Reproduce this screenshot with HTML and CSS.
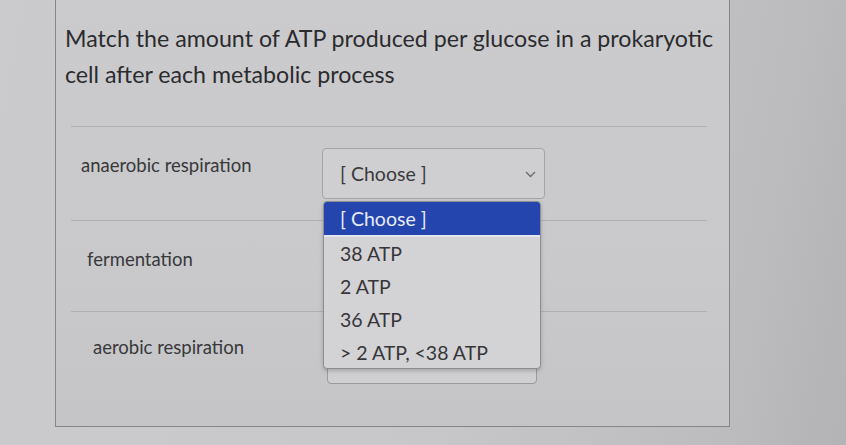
FILE: index.html
```html
<!DOCTYPE html>
<html>
<head>
<meta charset="utf-8">
<link rel="stylesheet" href="styles.css">
</head>
<body>
<div class="page">
  <div class="card">
    <p class="question">Match the amount of ATP produced per glucose in a prokaryotic cell after each metabolic process</p>
    <div class="rows">
      <div class="row">
        <div class="label">anaerobic respiration</div>
        <div class="select-wrap">
          <div class="select">
            <span>[ Choose ]</span>
            <svg class="chev" width="11" height="7" viewBox="0 0 11 7"><path d="M1 1 L5.5 5.5 L10 1" fill="none" stroke="#6a6a6e" stroke-width="1.3"/></svg>
          </div>
          <ul class="menu">
            <li class="active">[ Choose ]</li>
            <li>38 ATP</li>
            <li>2 ATP</li>
            <li>36 ATP</li>
            <li>&gt; 2 ATP, &lt;38 ATP</li>
          </ul>
        </div>
      </div>
      <div class="row">
        <div class="label">fermentation</div>
        <div class="select-wrap inner">
          <div class="select"></div>
        </div>
      </div>
      <div class="row">
        <div class="label">aerobic respiration</div>
        <div class="select-wrap inner">
          <div class="select"></div>
        </div>
      </div>
    </div>
  </div>
</div>
</body>
</html>
```
FILE: styles.css
```css
* { box-sizing: border-box; }
html, body {
  margin: 0;
  padding: 0;
  width: 846px;
  height: 445px;
  overflow: hidden;
}
body {
  font-family: Lato, "Open Sans", sans-serif;
  background: linear-gradient(100deg, #cbcbcd 0%, #c7c7c9 55%, #bdbdbf 85%, #b3b3b5 100%);
}
.page {
  padding-left: 55px;
}
.card {
  width: 675px;
  height: 428px;
  margin-top: -1px;
  border: 1px solid #85858a;
  background: linear-gradient(180deg, #cbcbcd 0%, #c9c9cb 60%, #c5c5c7 100%);
  padding: 20px 22px 0 9px;
}
.question {
  margin: 0;
  font-size: 23.2px;
  line-height: 36px;
  color: #2b2b2e;
  width: 660px;
}
.rows {
  margin-top: 34px;
  margin-left: 6px;
}
.row {
  border-top: 1px solid #b0b0b3;
  height: 94px;
  display: grid;
  grid-template-columns: 241px 223px;
  padding-left: 10px;
}
.row:nth-child(2) { height: 91px; }
.label {
  font-size: 18.5px;
  color: #38383b;
  padding-top: 27px;
}
.row:nth-child(2) .label { padding-left: 6px; }
.row:nth-child(3) .label { padding-left: 12px; padding-top: 24px; }
.select-wrap {
  position: relative;
  padding-top: 21px;
}
.select-wrap.inner {
  padding-left: 5px;
  padding-right: 8px;
}
.select {
  height: 51px;
  border: 1px solid #a4a4a8;
  border-radius: 4px;
  background: #cfcfd1;
  display: flex;
  align-items: center;
  justify-content: space-between;
  padding: 0 8px 0 17px;
  font-size: 19.5px;
  color: #3a3a3d;
}
.inner .select { border-color: #9a9a9e; }
.chev { margin-top: 2px; }
.menu {
  position: absolute;
  top: 74px;
  left: 1px;
  width: 218px;
  margin: 0;
  padding: 0;
  list-style: none;
  background: #d3d3d5;
  border: 1px solid #8e8e92;
  border-radius: 4px;
  box-shadow: 0 2px 4px rgba(0,0,0,0.2);
  z-index: 2;
  overflow: hidden;
}
.menu li {
  height: 33px;
  display: flex;
  align-items: center;
  padding-left: 16px;
  font-size: 19.5px;
  color: #36363a;
}
.menu li.active {
  height: 35px;
  background: #2545ae;
  color: #e6ebf8;
  border-bottom: 2px solid #e3e6ef;
}
.menu li:last-child { height: 32px; }
```
